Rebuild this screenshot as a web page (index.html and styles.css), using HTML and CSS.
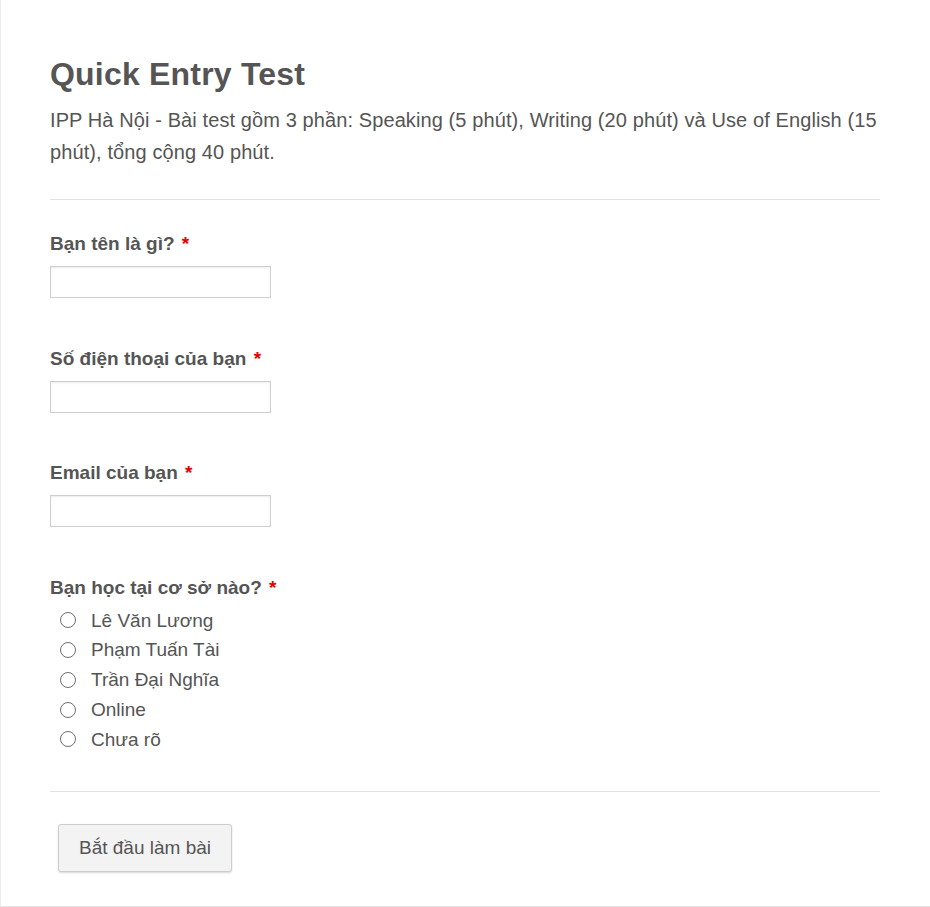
FILE: index.html
```html
<!DOCTYPE html>
<html lang="vi">
<head>
<meta charset="utf-8">
<title>Quick Entry Test</title>
<link rel="stylesheet" href="styles.css">
</head>
<body>
<div class="page">
  <form class="form">
    <div class="header">
      <h1 class="title">Quick Entry Test</h1>
      <p class="desc">IPP Hà Nội - Bài test gồm 3 phần: Speaking (5 phút), Writing (20 phút) và Use of English (15 phút), tổng cộng 40 phút.</p>
    </div>
    <div class="fields">
      <div class="field">
        <label class="label">Bạn tên là gì? <span class="req">*</span></label>
        <input class="input" type="text">
      </div>
      <div class="field">
        <label class="label">Số điện thoại của bạn <span class="req">*</span></label>
        <input class="input" type="text">
      </div>
      <div class="field">
        <label class="label">Email của bạn <span class="req">*</span></label>
        <input class="input" type="text">
      </div>
      <div class="field field-radio">
        <div class="label">Bạn học tại cơ sở nào? <span class="req">*</span></div>
        <ul class="options">
          <li class="option"><span class="radio"></span>Lê Văn Lương</li>
          <li class="option"><span class="radio"></span>Phạm Tuấn Tài</li>
          <li class="option"><span class="radio"></span>Trần Đại Nghĩa</li>
          <li class="option"><span class="radio"></span>Online</li>
          <li class="option"><span class="radio"></span>Chưa rõ</li>
        </ul>
      </div>
    </div>
    <div class="footer">
      <button class="btn" type="button">Bắt đầu làm bài</button>
    </div>
  </form>
</div>
</body>
</html>
```
FILE: styles.css
```css
html, body {
  margin: 0;
  padding: 0;
  background: #fff;
}
body {
  font-family: "Liberation Sans", Arial, sans-serif;
  color: #555;
}
.page {
  width: 929px;
  height: 906px;
  border-left: 1px solid #ebebeb;
  border-bottom: 1px solid #e6e6e6;
  box-sizing: content-box;
}
.form {
  padding: 55px 50px 0 49px;
}
.header {
  border-bottom: 1px solid #e1e1e1;
  padding-bottom: 31px;
}
.title {
  margin: 0;
  font-size: 32px;
  line-height: 38px;
  font-weight: bold;
  letter-spacing: 0.2px;
  color: #555;
}
.desc {
  margin: 11px 0 0;
  font-size: 20px;
  line-height: 32px;
  letter-spacing: 0.1px;
  color: #555;
}
.fields {
  padding-top: 33px;
  padding-bottom: 37px;
  border-bottom: 1px solid #e1e1e1;
  display: flex;
  flex-direction: column;
  gap: 49.5px;
}
.field {
  display: flex;
  flex-direction: column;
  align-items: flex-start;
}
.label {
  font-size: 19px;
  line-height: 22px;
  font-weight: bold;
  color: #555;
  margin-bottom: 11px;
}
.field-radio .label {
  margin-bottom: 7px;
}
.req {
  color: #e60000;
  margin-left: 2px;
}
.input {
  width: 221px;
  height: 32px;
  box-sizing: border-box;
  margin: 0;
  border: 1px solid #cfcfcf;
  box-shadow: inset 0 1px 2px rgba(0,0,0,0.08);
  background: #fff;
  padding: 4px 6px;
  font-size: 16px;
}
.options {
  list-style: none;
  margin: 0;
  padding: 0;
}
.option {
  display: flex;
  align-items: center;
  font-size: 19px;
  line-height: 29.75px;
  color: #555;
}
.radio {
  width: 16px;
  height: 16px;
  box-sizing: border-box;
  border: 1px solid #6f6f6f;
  border-radius: 50%;
  margin-left: 10px;
  margin-right: 15px;
  background: #fff;
}
.footer {
  padding-top: 32px;
}
.btn {
  margin-left: 8px;
  width: 174px;
  height: 48px;
  border: 1px solid #cdcdcd;
  border-radius: 3px;
  background: #f3f3f3;
  box-shadow: 0 1px 2px rgba(0,0,0,0.15);
  font-family: "Liberation Sans", Arial, sans-serif;
  font-size: 19px;
  color: #555;
  cursor: pointer;
}
```
